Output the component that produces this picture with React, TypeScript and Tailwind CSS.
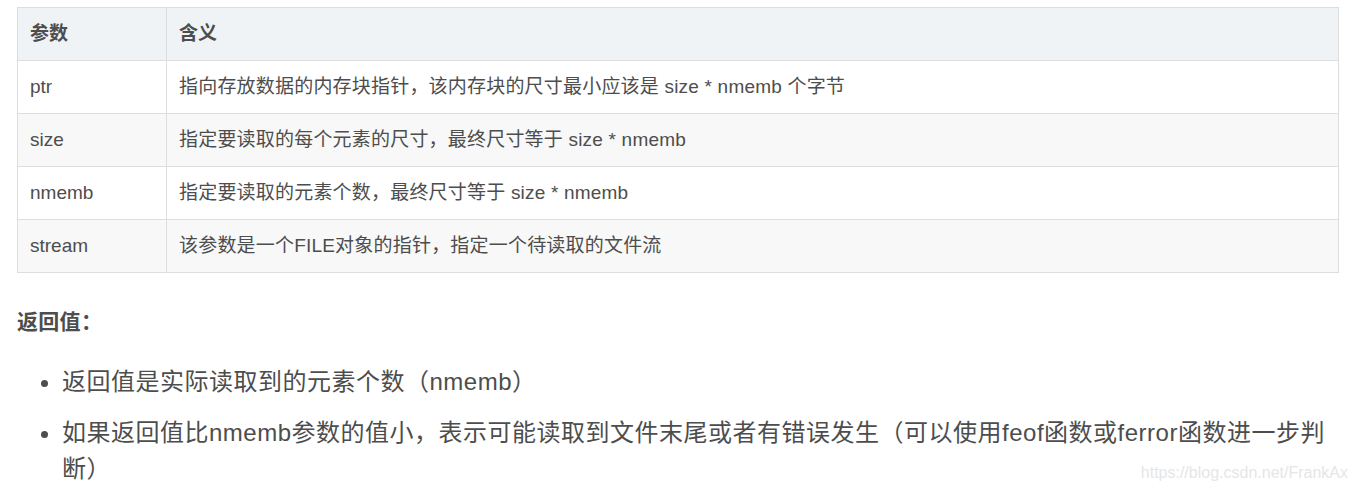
import React from "react";

const rows: [string, string][] = [
  ["ptr", "指向存放数据的内存块指针，该内存块的尺寸最小应该是 size * nmemb 个字节"],
  ["size", "指定要读取的每个元素的尺寸，最终尺寸等于 size * nmemb"],
  ["nmemb", "指定要读取的元素个数，最终尺寸等于 size * nmemb"],
  ["stream", "该参数是一个FILE对象的指针，指定一个待读取的文件流"],
];

export default function App() {
  return (
    <div
      className="w-[1358px] h-[492px] bg-white overflow-hidden relative text-[#4d4d4d]"
      style={{ fontFamily: '"Liberation Sans", "Noto Sans CJK SC", sans-serif' }}
    >
      <div className="pt-[7px] pl-[17px] pr-[19px]">
        <table className="w-full border-collapse text-[19px]">
          <thead>
            <tr className="bg-[#eff3f5]">
              <th className="w-[149px] h-[53px] border border-[#dddddd] text-left font-bold pl-[12px] align-middle">参数</th>
              <th className="h-[53px] border border-[#dddddd] text-left font-bold pl-[12px] align-middle">含义</th>
            </tr>
          </thead>
          <tbody>
            {rows.map(([a, b], i) => (
              <tr key={a} className={i % 2 === 1 ? "bg-[#f8f8f8]" : "bg-white"}>
                <td className="h-[53px] border border-[#dddddd] pl-[12px] align-middle">{a}</td>
                <td className="h-[53px] border border-[#dddddd] pl-[12px] align-middle tracking-[0.2px]">{b}</td>
              </tr>
            ))}
          </tbody>
        </table>
        <p className="mt-[33px] text-[21px] leading-[32px] font-bold tracking-[0.3px]">返回值：</p>
        <ul className="mt-[26px] list-disc pl-[45px] text-[24px] leading-[36px] pr-[4px] tracking-[0.5px]">
          <li className="mb-[15px]">返回值是实际读取到的元素个数（nmemb）</li>
          <li>如果返回值比nmemb参数的值小，表示可能读取到文件末尾或者有错误发生（可以使用feof函数或ferror函数进一步判断）</li>
        </ul>
      </div>
      <div className="absolute right-[10px] top-[463px] text-[16px] leading-[20px] text-[#e6e6e6]">
        https://blog.csdn.net/FrankAx
      </div>
    </div>
  );
}
